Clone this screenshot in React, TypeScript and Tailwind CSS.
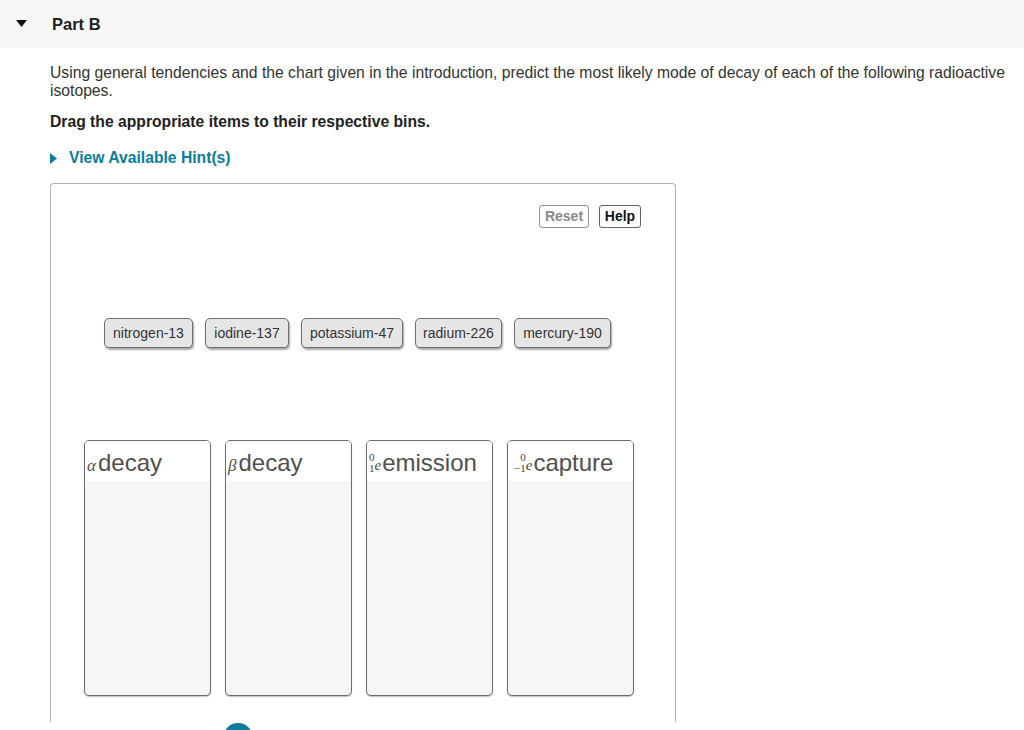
import React from "react";

const tokens = [
  { label: "nitrogen-13", w: "w-[89px]" },
  { label: "iodine-137", w: "w-[84px]" },
  { label: "potassium-47", w: "w-[102px]" },
  { label: "radium-226", w: "w-[87px]" },
  { label: "mercury-190", w: "w-[97px]" },
];

const serif = { fontFamily: "'Liberation Serif', 'DejaVu Serif', serif" };

function Nuclide({ top, bottom }: { top: string; bottom: string }) {
  return (
    <span className="inline-flex items-center mr-[1px]" style={serif}>
      <span className="flex flex-col items-end text-[11px] leading-[11px] text-[#444]">
        <span className="h-[11px]">{top}</span>
        <span className="h-[11px]">{bottom}</span>
      </span>
      <span className="text-[15px] italic leading-none text-[#444] mt-[5px]">e</span>
    </span>
  );
}

function Bin({ children }: { children: React.ReactNode }) {
  return (
    <div className="w-[127px] h-[256px] flex flex-col rounded-[5px] border border-[#6b6b6b] bg-[#f6f6f6] overflow-hidden shadow-[0_1px_1px_rgba(0,0,0,0.25)]">
      <div className="h-[40px] bg-white flex items-center pl-[2px] pt-[3px] text-[24px] text-[#505050] leading-none">
        {children}
      </div>
    </div>
  );
}

export default function App() {
  return (
    <div className="min-h-screen bg-white text-[#333]" style={{ fontFamily: "'Liberation Sans', Arial, sans-serif" }}>
      {/* part header */}
      <div className="h-12 bg-[#f7f7f7] flex items-center">
        <svg width="11" height="8" viewBox="0 0 11 8" className="ml-[16px] mt-[-1px]">
          <polygon points="0,0 11,0 5.5,7" fill="#111" />
        </svg>
        <span className="ml-[25px] text-[16.5px] font-bold text-[#222]">Part B</span>
      </div>

      <div className="pl-[50px] pr-[14px]">
        <p className="mt-[16px] text-[15.7px] leading-[18px] text-[#333]">
          Using general tendencies and the chart given in the introduction, predict the most likely mode of decay of each of the following radioactive isotopes.
        </p>
        <p className="mt-[13px] text-[15.7px] leading-[18px] font-bold text-[#222]">
          Drag the appropriate items to their respective bins.
        </p>
        <div className="mt-[18px] flex items-center h-[18px]">
          <svg width="7" height="11" viewBox="0 0 7 11">
            <polygon points="0,0 7,5.5 0,11" fill="#0b7d9c" />
          </svg>
          <span className="ml-[12px] text-[15.7px] font-bold text-[#0b7d9c]">View Available Hint(s)</span>
        </div>

        {/* drag and drop area */}
        <div className="mt-[16px] w-[626px] h-[539px] border-t border-l border-r border-[#b3b3b3] rounded-t-[4px]">
          <div className="flex justify-end gap-[10px] pt-[21px] pr-[34px]">
            <button className="h-[23px] w-[50px] rounded-[3px] border border-[#8a9499] text-[14px] font-bold text-[#8a8a8a] bg-white">
              Reset
            </button>
            <button className="h-[23px] w-[42px] rounded-[3px] border border-[#5e6a70] text-[14px] font-bold text-[#111] bg-white">
              Help
            </button>
          </div>

          <div className="mt-[90px] flex gap-[12px] pl-[53px]">
            {tokens.map((t) => (
              <div
                key={t.label}
                className={`${t.w} h-[30px] flex items-center justify-center rounded-[5px] border border-[#6e6e6e] bg-[#e6e6e6] text-[14px] text-[#333] shadow-[1px_2px_2px_rgba(0,0,0,0.35)]`}
              >
                {t.label}
              </div>
            ))}
          </div>

          <div className="mt-[92px] flex gap-[14px] pl-[33px]">
            <Bin>
              <span className="text-[17px] italic mr-[2px] mt-[5px]" style={serif}>α</span>
              <span>decay</span>
            </Bin>
            <Bin>
              <span className="text-[17px] italic mr-[2px] mt-[5px]" style={serif}>β</span>
              <span>decay</span>
            </Bin>
            <Bin>
              <Nuclide top="0" bottom="1" />
              <span>emission</span>
            </Bin>
            <Bin>
              <span className="ml-[4px]" />
              <Nuclide top="0" bottom="−1" />
              <span>capture</span>
            </Bin>
          </div>
        </div>
        <div className="ml-[173px] mt-[1px] w-[30px] h-[30px] rounded-full bg-[#0b7d9c]" />
      </div>
    </div>
  );
}
